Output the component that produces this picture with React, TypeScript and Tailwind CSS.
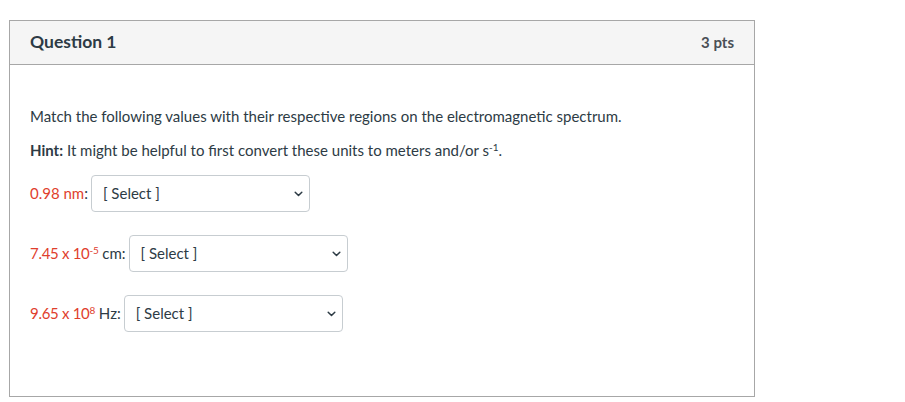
import React from "react";

const Chevron = () => (
  <svg width="9" height="6" viewBox="0 0 9 6" className="shrink-0">
    <path d="M1.2 1.2 L4.5 4.5 L7.8 1.2" fill="none" stroke="#2d3b45" strokeWidth="1.5" strokeLinecap="round" strokeLinejoin="round" />
  </svg>
);

const Select = () => (
  <div className="flex h-[37px] w-[219px] items-center justify-between rounded-[4px] border border-[#c7cdd1] bg-white pl-[11px] pr-[6px] text-[15px] text-[#2d3b45]">
    <span>[ Select ]</span>
    <Chevron />
  </div>
);

export default function App() {
  return (
    <div className="h-[402px] w-[905px] bg-white pl-[9px] pt-[20px]" style={{ fontFamily: "Lato, 'Liberation Sans', sans-serif" }}>
      <div className="flex h-[377px] w-[746px] flex-col border border-[#a7a7a7]">
        <div className="flex h-[44px] items-center justify-between border-b border-[#a7a7a7] bg-[#f5f5f5] pl-[20px] pr-[20px]">
          <span className="text-[17.5px] font-bold text-[#2d3b45]">Question 1</span>
          <span className="text-[15px] font-bold text-[#4a4f55]">3 pts</span>
        </div>
        <div className="flex flex-col pl-[20px] pt-[41px] text-[15px] text-[#2d3b45]">
          <p className="leading-[20px]">Match the following values with their respective regions on the electromagnetic spectrum.</p>
          <p className="mt-[14px] leading-[20px]">
            <b>Hint:</b> It might be helpful to first convert these units to meters and/or s<sup className="text-[10px]">-1</sup>.
          </p>
          <div className="mt-[15px] flex items-center gap-[3px]">
            <span><span className="text-[#e03e2d]">0.98 nm</span>:</span>
            <Select />
          </div>
          <div className="mt-[23px] flex items-center gap-[3px]">
            <span>
              <span className="tracking-[-0.3px] text-[#e03e2d]">7.45 x 10<sup className="text-[10px]">-5</sup></span> cm:
            </span>
            <Select />
          </div>
          <div className="mt-[23px] flex items-center gap-[3px]">
            <span>
              <span className="tracking-[-0.3px] text-[#e03e2d]">9.65 x 10<sup className="text-[10px]">8</sup></span> Hz:
            </span>
            <Select />
          </div>
        </div>
      </div>
    </div>
  );
}
